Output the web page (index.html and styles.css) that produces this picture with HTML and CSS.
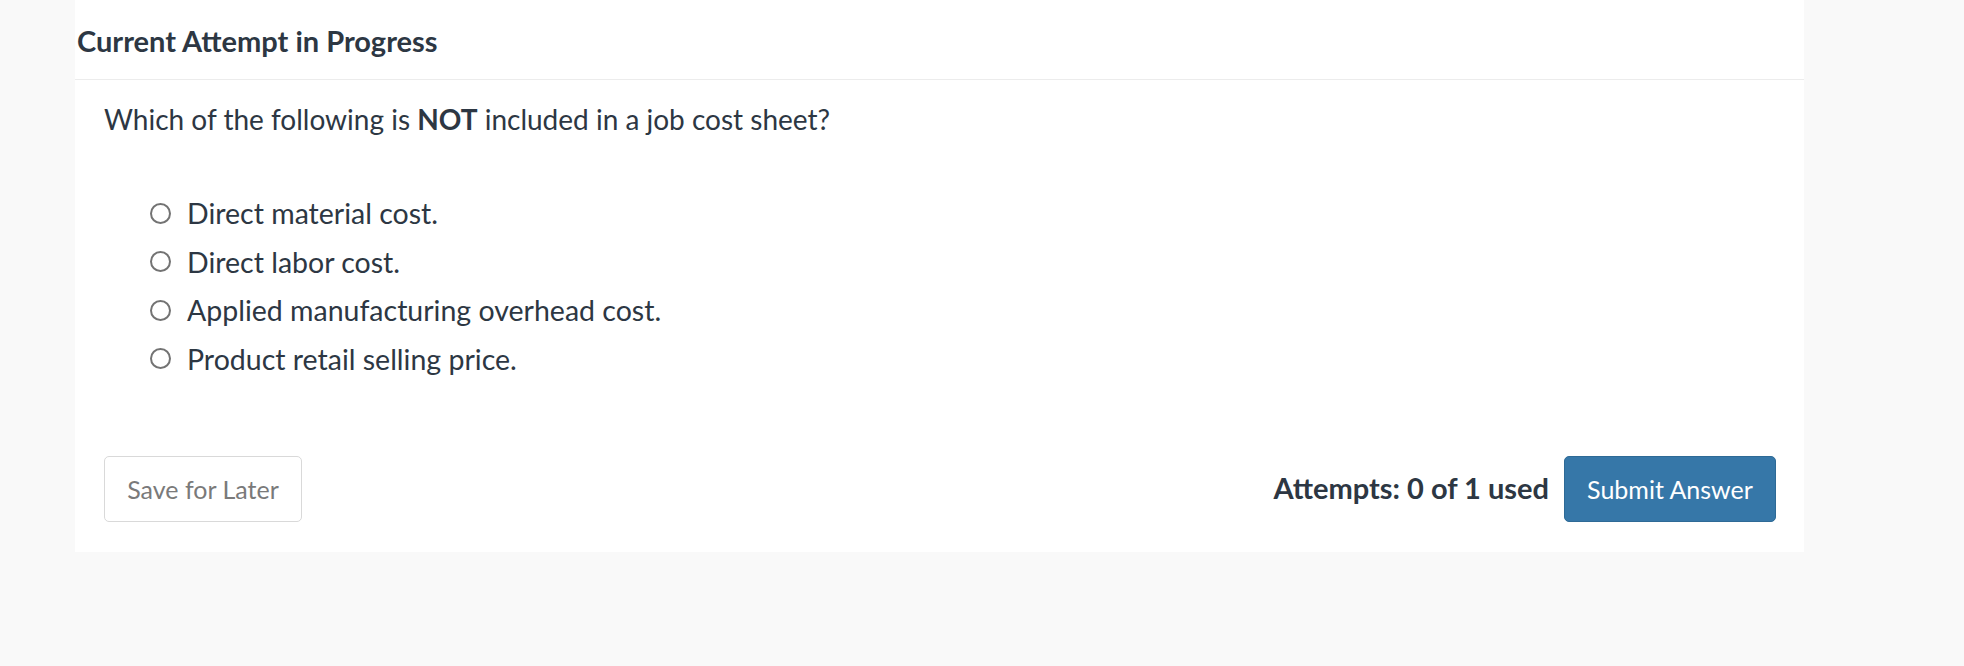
FILE: index.html
```html
<!DOCTYPE html>
<html lang="en">
<head>
    <meta charset="UTF-8">
    <title>Current Attempt in Progress</title>
    <link rel="stylesheet" href="styles.css">
</head>
<body>
    <div class="panel">
        <div class="panel-header">Current Attempt in Progress</div>
        <div class="panel-body">
            <p class="question">Which of the following is <b>NOT</b> included in a job cost sheet?</p>
            <ul class="choices">
                <li><label><input type="radio" name="answer" class="radio"> Direct material cost.</label></li>
                <li><label><input type="radio" name="answer" class="radio"> Direct labor cost.</label></li>
                <li><label><input type="radio" name="answer" class="radio"> Applied manufacturing overhead cost.</label></li>
                <li><label><input type="radio" name="answer" class="radio"> Product retail selling price.</label></li>
            </ul>
            <div class="actions">
                <button class="btn btn-save">Save for Later</button>
                <div class="submit-group">
                    <span class="attempts">Attempts: 0 of 1 used</span>
                    <button class="btn btn-submit">Submit Answer</button>
                </div>
            </div>
        </div>
    </div>
</body>
</html>
```

FILE: styles.css
```css
body {
    margin: 0;
    background-color: #f9f9f9;
    font-family: "Lato", "Liberation Sans", sans-serif;
    color: #2d3743;
}
.panel {
    margin-left: 75px;
    width: 1729px;
    background-color: #fff;
}
.panel-header {
    height: 80px;
    display: flex;
    align-items: center;
    padding-left: 2px;
    padding-top: 2px;
    box-sizing: border-box;
    border-bottom: 1px solid #ececec;
    font-size: 29px;
    font-weight: bold;
}
.panel-body {
    padding: 22px 28px 30px 29px;
}
.question {
    margin: 0;
    font-size: 28px;
    line-height: 35px;
}
.choices {
    list-style: none;
    margin: 52px 0 0 0;
    padding: 0 0 0 46px;
}
.choices li {
    height: 48.5px;
    display: flex;
    align-items: center;
    font-size: 28.5px;
}
.choices label {
    display: flex;
    align-items: center;
}
.radio {
    appearance: none;
    -webkit-appearance: none;
    width: 21px;
    height: 21px;
    margin: 0 16px 0 0;
    border: 2px solid #737373;
    border-radius: 50%;
    background: #fff;
    box-sizing: border-box;
}
.actions {
    margin-top: 73px;
    display: flex;
    justify-content: space-between;
    align-items: center;
}
.submit-group {
    display: flex;
    align-items: center;
    gap: 15px;
}
.attempts {
    font-size: 29px;
    font-weight: bold;
    padding-bottom: 4px;
}
.btn {
    height: 66px;
    border-radius: 5px;
    font-family: "Lato", "Liberation Sans", sans-serif;
    font-size: 25px;
    cursor: pointer;
}
.btn-save {
    width: 198px;
    border: 1px solid #d9d9d9;
    background-color: #fff;
    color: #7a7a7a;
}
.btn-submit {
    width: 212px;
    border: 1px solid #2e6a96;
    background-color: #3677a8;
    color: #fff;
}
```
